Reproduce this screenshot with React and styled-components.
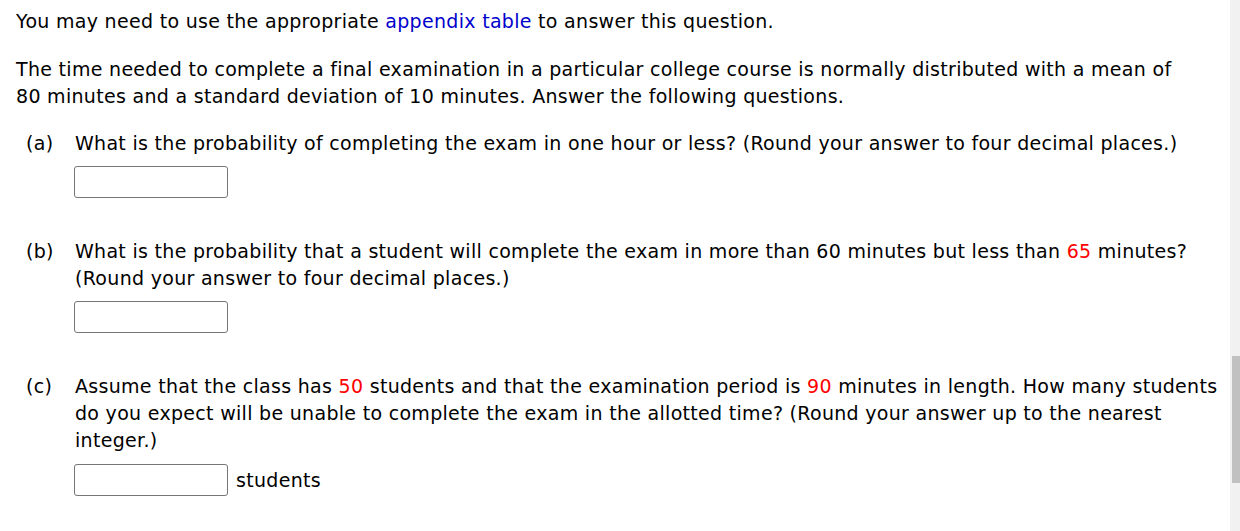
import styled, { createGlobalStyle } from "styled-components";

const GlobalStyle = createGlobalStyle`
  html, body {
    margin: 0;
    padding: 0;
    background: #ffffff;
  }
  body {
    font-family: "DejaVu Sans", Verdana, sans-serif;
    font-size: 19px;
    letter-spacing: 0.3px;
    color: #000000;
  }
`;

const Page = styled.div`
  display: flex;
  height: 531px;
  overflow: hidden;
`;

const Content = styled.div`
  flex: 1;
  padding: 8px 0 0 16px;
  line-height: 27px;
  white-space: nowrap;
`;

const Scrollbar = styled.div`
  width: 10px;
  background: #f1f1f1;
  display: flex;
  flex-direction: column;
  padding-top: 356px;
  align-items: flex-end;
`;

const Thumb = styled.div`
  width: 8px;
  height: 127px;
  background: #c1c1c1;
`;

const Para = styled.p`
  margin: 0 0 ${(p) => p.$gap}px 0;
`;

const Link = styled.a`
  color: #0000cc;
  text-decoration: none;
`;

const Red = styled.span`
  color: #ff0000;
`;

const Part = styled.div`
  display: grid;
  grid-template-columns: 49px 1fr;
  padding-left: 10px;
  margin-bottom: ${(p) => p.$gap}px;
`;

const Label = styled.div``;

const Body = styled.div``;

const AnswerRow = styled.div`
  display: flex;
  align-items: center;
  gap: 8px;
  margin-top: ${(p) => p.$top}px;
  margin-left: -1px;
`;

const Input = styled.div`
  box-sizing: border-box;
  width: 154px;
  height: 32px;
  border: 1px solid #767676;
  border-radius: 3px;
`;

export default function App() {
  return (
    <>
      <GlobalStyle />
      <Page>
        <Content>
          <Para $gap={21}>
            You may need to use the appropriate <Link href="#">appendix table</Link> to answer this question.
          </Para>
          <Para $gap={20}>
            The time needed to complete a final examination in a particular college course is normally distributed with a mean of
            <br />
            80 minutes and a standard deviation of 10 minutes. Answer the following questions.
          </Para>
          <Part $gap={40}>
            <Label>(a)</Label>
            <Body>
              What is the probability of completing the exam in one hour or less? (Round your answer to four decimal places.)
              <AnswerRow $top={9}>
                <Input />
              </AnswerRow>
            </Body>
          </Part>
          <Part $gap={40}>
            <Label>(b)</Label>
            <Body>
              What is the probability that a student will complete the exam in more than 60 minutes but less than <Red>65</Red> minutes?
              <br />
              (Round your answer to four decimal places.)
              <AnswerRow $top={9}>
                <Input />
              </AnswerRow>
            </Body>
          </Part>
          <Part $gap={0}>
            <Label>(c)</Label>
            <Body>
              Assume that the class has <Red>50</Red> students and that the examination period is <Red>90</Red> minutes in length. How many students
              <br />
              do you expect will be unable to complete the exam in the allotted time? (Round your answer up to the nearest
              <br />
              integer.)
              <AnswerRow $top={10}>
                <Input />
                <span>students</span>
              </AnswerRow>
            </Body>
          </Part>
        </Content>
        <Scrollbar>
          <Thumb />
        </Scrollbar>
      </Page>
    </>
  );
}
